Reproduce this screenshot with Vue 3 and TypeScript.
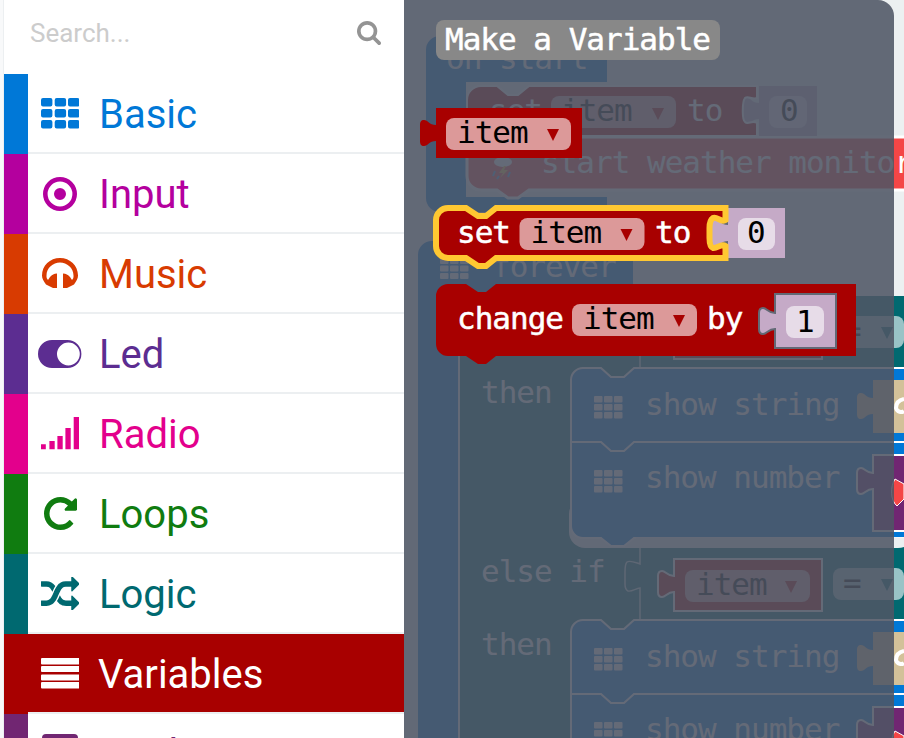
<script setup lang="ts">
interface Category {
  name: string
  color: string
  vb: string
  w: number
  h: number
  d: string
  active?: boolean
}

interface Field {
  x: number
  y: number
}

const gridPath = (): string => {
  const xs = [0, 13.7, 27]
  const ys = [0, 11, 22]
  return xs
    .flatMap((x) =>
      ys.map(
        (y) =>
          `M${x + 2} ${y}h7.4a2 2 0 0 1 2 2v4.6a2 2 0 0 1-2 2h-7.4a2 2 0 0 1-2-2v-4.6a2 2 0 0 1 2-2z`
      )
    )
    .join('')
}

const categories: Category[] = [
  { name: 'Basic', color: '#0078d7', vb: '0 0 38.4 30.6', w: 38.4, h: 30.6, d: gridPath() },
  {
    name: 'Input',
    color: '#b4009e',
    vb: '0 0 34 34',
    w: 34,
    h: 34,
    d: 'M17 0a17 17 0 1 0 0 34a17 17 0 1 0 0-34zM17 4.6a12.4 12.4 0 1 1 0 24.8a12.4 12.4 0 1 1 0-24.8zM17 11a6 6 0 1 0 0 12a6 6 0 1 0 0-12z'
  },
  {
    name: 'Music',
    color: '#d83b01',
    vb: '0 0 36 31',
    w: 36,
    h: 31,
    d: 'M15 15.5V30H11L4 26.5C1.5 23 0 20.500 0 17.500C0 7.500 8 0 18 0S36 7.500 36 17.500C36 20.500 34.500 23 32 26.500L25 30H21V15.500C24 15.500 26 17 28 19L30 22C31 21 31.500 20 31.500 19V17.500C31.500 10 25 4.500 18 4.500S4.500 10 4.500 17.500V19C4.500 20 5 21 6 22L8 19C10 17 12 15.500 15 15.500Z'
  },
  {
    name: 'Led',
    color: '#5c2d91',
    vb: '0 0 43.4 28',
    w: 43.4,
    h: 28,
    d: 'M14 0h15.4a14 14 0 0 1 0 28H14a14 14 0 0 1 0-28zM30.4 2.6a11.400 11.400 0 1 0 0 22.8a11.400 11.400 0 1 0 0-22.800z'
  },
  {
    name: 'Radio',
    color: '#e3008c',
    vb: '0 0 38 32.3',
    w: 38,
    h: 32.3,
    d: 'M0 27.3h4.8v5H0zM8.400 24h5.300v8.300H8.400zM16.400 19h5.300v13.300h-5.300zM24.400 11h5.300v21.300h-5.300zM32.700 0H38v32.300h-5.300z'
  },
  {
    name: 'Loops',
    color: '#107c10',
    vb: '128 128 1536 1536',
    w: 33,
    h: 33,
    d: 'M1664 256v448q0 26-19 45t-45 19h-448q-42 0-59-40-17-39 14-69l138-138q-148-137-349-137-104 0-198.500 40.500t-163.500 109.500-109.500 163.500-40.500 198.500 40.500 198.500 109.500 163.500 163.500 109.500 198.500 40.500q119 0 225-52t179-147q7-10 23-12 15 0 25 9l137 138q9 8 9.500 20.500t-7.500 22.500q-109 132-264 204.500t-327 72.500q-156 0-298-61t-245-164-164-245-61-298 61-298 164-245 245-164 298-61q147 0 284.500 55.500t244.500 156.500l130-129q29-31 70-14 39 17 39 59z'
  },
  {
    name: 'Logic',
    color: '#006970',
    vb: '0 64 1792 1536',
    w: 38.5,
    h: 33,
    d: 'M666 481q-60 92-137 273-22-45-37-72.500t-40.500-63.500-51-56.500-63-35-81.500-14.500h-224q-14 0-23-9t-9-23v-192q0-14 9-23t23-9h224q250 0 410 225zm1126 799q0 14-9 23l-320 320q-9 9-23 9-13 0-22.500-9.500t-9.500-22.500v-192q-32 0-85 .5t-81 1-73-1-71-5-64-10.500-63-18.500-58-28.500-59-40-55-53.500-56-69.500q59-93 136-273 22 45 37 72.500t40.500 63.500 51 56.500 63 35 81.500 14.500h256v-192q0-14 9-23t23-9q12 0 24 10l319 319q9 9 9 23zm0-896q0 14-9 23l-320 320q-9 9-23 9-13 0-22.500-9.500t-9.500-22.500v-192h-256q-48 0-87 15t-69 45-51 61.500-45 77.500q-32 62-78 171-29 66-49.500 111t-54 105-64 100-74 83-90 68.500-106.500 42-128 16.500h-224q-14 0-23-9t-9-23v-192q0-14 9-23t23-9h224q48 0 87-15t69-45 51-61.500 45-77.500q32-62 78-171 29-66 49.500-111t54-105 64-100 74-83 90-68.500 106.500-42 128-16.500h256v-192q0-14 9-23t23-9q12 0 24 10l319 319q9 9 9 23z'
  },
  {
    name: 'Variables',
    color: '#a80000',
    vb: '0 0 38.5 30.5',
    w: 38.5,
    h: 30.5,
    d: 'M1 0h36.5a1 1 0 0 1 1 1v4.5a1 1 0 0 1-1 1H1a1 1 0 0 1-1-1V1a1 1 0 0 1 1-1zM1 8h36.5a1 1 0 0 1 1 1v4a1 1 0 0 1-1 1H1a1 1 0 0 1-1-1V9a1 1 0 0 1 1-1zM1 16.500h36.500a1 1 0 0 1 1 1v4a1 1 0 0 1-1 1H1a1 1 0 0 1-1-1v-4a1 1 0 0 1 1-1zM1 24h36.500a1 1 0 0 1 1 1v4.500a1 1 0 0 1-1 1H1a1 1 0 0 1-1-1V25a1 1 0 0 1 1-1z',
    active: true
  },
  {
    name: 'Math',
    color: '#712672',
    vb: '0 0 36 40',
    w: 36,
    h: 40,
    d: 'M4 0h28a4 4 0 0 1 4 4v32a4 4 0 0 1-4 4H4a4 4 0 0 1-4-4V4a4 4 0 0 1 4-4z'
  }
]

// rectangle with the puzzle tab sticking out on its left side
const tabbed = (x: number, y: number, w: number, h: number, yc: number): string =>
  `M${x} ${y}h${w}v${h}h${-w}V${yc + 8}` +
  `C${x - 7} ${yc + 8} ${x - 8} ${yc + 13} ${x - 12} ${yc + 13}` +
  `C${x - 15} ${yc + 13} ${x - 16} ${yc + 11} ${x - 16} ${yc + 8}V${yc - 8}` +
  `C${x - 16} ${yc - 11} ${x - 15} ${yc - 13} ${x - 12} ${yc - 13}` +
  `C${x - 8} ${yc - 13} ${x - 7} ${yc - 8} ${x} ${yc - 8}Z`

const arrow = (x: number, y: number): string => `${x},${y} ${x + 12},${y} ${x + 6},${y + 12}`

const gridCells = (x: number, y: number, w: number, h: number): Field[] => {
  const cells: Field[] = []
  for (let r = 0; r < 3; r++) {
    for (let c = 0; c < 3; c++) {
      cells.push({ x: x + c * (w + 1.5), y: y + r * (h + 1.5) })
    }
  }
  return cells
}

const setBlock =
  'M448 208H466L478 216H486L496 208H725.5V220C721 223 717 216 713 218C710 220 709.5 224 709.5 228V238C709.5 243 710 247 713 248C717 249 721 243 725.5 246V258H496L486 266H478L466 258H448A12 12 0 0 1 436 246V220A12 12 0 0 1 448 208Z'
const changeBlock =
  'M448 284H466L478 292H486L496 284H856V356H496L486 364H478L466 356H448A12 12 0 0 1 436 344V296A12 12 0 0 1 448 284Z'

const pills: Field[] = [
  { x: 446, y: 118 },
  { x: 519.5, y: 218 },
  { x: 572, y: 304 }
]

const statementTops = [368, 620]
</script>

<template>
  <div class="app">
    <div class="gutter"></div>

    <aside class="toolbox">
      <div class="search">
        <input class="search-input" type="text" placeholder="Search..." />
        <svg class="search-icon" viewBox="64 128 1664 1664" width="24" height="24">
          <path
            fill="#949494"
            d="M1216 832q0-185-131.500-316.500t-316.500-131.500-316.500 131.500-131.500 316.500 131.500 316.500 316.500 131.500 316.500-131.500 131.500-316.500zm512 832q0 52-38 90t-90 38q-54 0-90-38l-343-342q-179 124-399 124-143 0-273.500-55.500t-225-150-150-225-55.500-273.500 55.500-273.500 150-225 225-150 273.500-55.500 273.500 55.500 225 150 150 225 55.500 273.500q0 220-124 399l343 343q37 37 37 90z"
          />
        </svg>
      </div>
      <div
        v-for="cat in categories"
        :key="cat.name"
        class="cat"
        :class="{ active: cat.active }"
        :style="{ '--cat': cat.color }"
      >
        <span class="strip"></span>
        <span class="cat-body">
          <span class="cat-icon">
            <svg :viewBox="cat.vb" :width="cat.w" :height="cat.h">
              <path :d="cat.d" fill="currentColor" fill-rule="evenodd" />
            </svg>
          </span>
          <span class="cat-name">{{ cat.name }}</span>
        </span>
      </div>
    </aside>

    <div class="workspace">
      <svg class="canvas" viewBox="404 0 500 738" width="500" height="738">
        <!-- workspace blocks lying under the flyout -->
        <g class="under">
          <path
            d="M440 36H595A12 12 0 0 1 607 48V82H466V197H607V212H440A14 14 0 0 1 426 198V50A14 14 0 0 1 440 36Z"
            fill="#0078d7"
          />
          <text x="446" y="69" class="code" fill="#fff">on start</text>

          <path
            d="M467 137H910V190H529L518 198H508L497 190H481A14 14 0 0 1 467 176Z"
            fill="#f44646"
            stroke="#fff"
            stroke-width="3"
          />
          <path :d="tabbed(759, 86, 58, 50, 111)" fill="#c5aac7" />
          <path
            d="M481 86H497L508 95H518L529 86H757V98C752 100 748 95 745 98C742 102 742 120 745 122C748 125 752 120 757 123V136H467V100A14 14 0 0 1 481 86Z"
            fill="#a80000"
            stroke="#fff"
            stroke-width="2"
          />
          <text x="489" y="121" class="code" fill="#fff">set</text>
          <rect x="551" y="96" width="125" height="32" rx="8" fill="#fff" fill-opacity="0.6" />
          <text x="561" y="121" class="code" fill="#000">item</text>
          <polygon :points="arrow(652, 108)" fill="#a80000" />
          <text x="687" y="121" class="code" fill="#fff">to</text>
          <rect x="769" y="96" width="38" height="32" rx="8" fill="#fff" fill-opacity="0.6" />
          <text x="780" y="121" class="code" fill="#000">0</text>
          <text x="541" y="173" class="code" fill="#fff">start weather monitor</text>
          <ellipse cx="503" cy="162" rx="9" ry="5" fill="#fff" />
          <path d="M504 166L499 173H503L500 178L508 170H504L506 166Z" fill="#f5c242" />
          <path d="M495 171L493 176M499 176L497 179M510 172L508 177" stroke="#4aa3e8" stroke-width="2" />

          <path
            d="M432 241H619A14 14 0 0 1 633 255V296H459V760H418V255A14 14 0 0 1 432 241Z"
            fill="#0078d7"
          />
          <rect
            v-for="(c, i) in gridCells(440, 258, 8.5, 6)"
            :key="'f' + i"
            :x="c.x"
            :y="c.y"
            width="8.5"
            height="6"
            rx="1"
            fill="#fff"
          />
          <text x="492" y="277" class="code" fill="#fff">forever</text>
          <rect x="459" y="296" width="451" height="464" fill="#006970" />
          <path d="M459 296V760" stroke="#fff" stroke-width="2" fill="none" />

          <text x="481" y="403" class="code" fill="#fff">then</text>
          <text x="481" y="582" class="code" fill="#fff">else if</text>
          <text x="481" y="655" class="code" fill="#fff">then</text>

          <g v-for="top in statementTops" :key="top" :transform="`translate(0 ${top})`">
            <!-- condition row above the statement -->
            <path
              d="M640 -72V-56C634 -58 630 -60 627 -58C625 -56 625 -52 625 -48V-36C625 -32 626 -30 628 -29C632 -28 636 -32 640 -32V0"
              stroke="#fff"
              stroke-opacity="0.8"
              stroke-width="1.5"
              fill="none"
            />
            <path :d="tabbed(674, -61, 148, 52, -36)" fill="#a80000" stroke="#fff" stroke-width="2" />
            <rect x="685" y="-50" width="125" height="32" rx="8" fill="#fff" fill-opacity="0.6" />
            <text x="696" y="-25" class="code" fill="#000">item</text>
            <polygon :points="arrow(785, -39)" fill="#a80000" />
            <rect x="833" y="-52" width="71" height="32" rx="8" fill="#fff" fill-opacity="0.6" />
            <text x="843" y="-27" class="code" fill="#000">=</text>
            <polygon :points="arrow(881, -41)" fill="#006970" />

            <rect x="569" y="130" width="345" height="50" rx="16" fill="#ecf0f1" />
            <path
              d="M571 12A12 12 0 0 1 583 0H601L611 9H624L634 0H910V170H634L624 178H611L601 170H583A12 12 0 0 1 571 158Z"
              fill="#0078d7"
              stroke="#fff"
              stroke-width="2"
            />
            <path d="M636 171H910" stroke="#ecf0f1" stroke-width="3" />
            <path d="M571 74H601L611 83H624L634 74H910" stroke="#fff" stroke-width="2" fill="none" />

            <rect
              v-for="(c, i) in gridCells(594, 28, 8.5, 6.5)"
              :key="'a' + i"
              :x="c.x"
              :y="c.y"
              width="8.5"
              height="6.5"
              rx="1"
              fill="#fff"
            />
            <rect
              v-for="(c, i) in gridCells(594, 102, 8.5, 6.5)"
              :key="'b' + i"
              :x="c.x"
              :y="c.y"
              width="8.5"
              height="6.5"
              rx="1"
              fill="#fff"
            />
            <text x="645" y="47" class="code" fill="#fff">show string</text>
            <text x="645" y="120" class="code" fill="#fff">show number</text>

            <path :d="tabbed(873, 12, 37, 53, 38)" fill="#d3c199" />
            <path d="M904 31C899 32 896 35 896 40C897 44 902 45 904 43" stroke="#fff" stroke-width="4" fill="none" />
            <path :d="tabbed(873, 87, 37, 76, 113)" fill="#712672" stroke="#fff" stroke-width="2" />
            <path d="M904 116L895 111C890 119 890 132 897 138L904 131Z" fill="#f44646" stroke="#fff" stroke-width="1" />
          </g>
        </g>

        <!-- flyout panel -->
        <path d="M404 0H878A16 16 0 0 1 894 16V738H404Z" fill="rgb(78,85,100)" fill-opacity="0.88" />

        <!-- flyout blocks -->
        <rect x="436" y="20" width="284" height="40" rx="8" fill="#888" />
        <text x="445" y="50" class="code heavy" fill="#fff">Make a Variable</text>

        <path :d="tabbed(436, 108, 146, 50, 133)" fill="#a80000" />

        <path :d="tabbed(728, 208, 57, 50, 233)" fill="#c5aac7" />
        <path :d="setBlock" fill="#a80000" stroke="#ffc832" stroke-width="6" />
        <text x="457" y="243" class="code heavy" fill="#fff">set</text>
        <text x="655" y="243" class="code heavy" fill="#fff">to</text>
        <rect x="738" y="218" width="37" height="32" rx="8" fill="#e7dce8" />
        <text x="747" y="243" class="code" fill="#000">0</text>

        <path :d="changeBlock" fill="#a80000" />
        <text x="457" y="329" class="code heavy" fill="#fff">change</text>
        <text x="707" y="329" class="code heavy" fill="#fff">by</text>
        <path :d="tabbed(775, 294, 61, 54, 321)" fill="#c5aac7" stroke="#626975" stroke-width="2" />
        <rect x="786" y="306" width="38" height="32" rx="8" fill="#e7dce8" />
        <text x="796" y="332" class="code" fill="#000">1</text>

        <g v-for="(p, i) in pills" :key="'p' + i">
          <rect :x="p.x" :y="p.y" width="125" height="32" rx="8" fill="#dc9999" />
          <text :x="p.x + 11" :y="p.y + 25" class="code" fill="#000">item</text>
          <polygon :points="arrow(p.x + 101, p.y + 11)" fill="#a80000" />
        </g>
      </svg>
    </div>
  </div>
</template>

<style scoped>
.app {
  display: flex;
  width: 904px;
  height: 738px;
  overflow: hidden;
  background: #fff;
}

.gutter {
  flex: none;
  width: 3px;
  background: #f8f9fa;
  border-right: 1px solid #eceff1;
}

.toolbox {
  flex: none;
  width: 400px;
  height: 738px;
  overflow: hidden;
  background: #fff;
  font-family: Roboto, sans-serif;
}

.search {
  display: flex;
  align-items: center;
  height: 74px;
  padding: 0 23px 8px 26px;
  box-sizing: border-box;
}

.search-input {
  flex: 1;
  min-width: 0;
  border: 0;
  outline: 0;
  padding: 0;
  font-family: Roboto, sans-serif;
  font-size: 26px;
  background: transparent;
}

.search-input::placeholder {
  color: #ccc;
  opacity: 1;
}

.search-icon {
  flex: none;
}

.cat {
  display: flex;
  height: 80px;
  color: var(--cat);
}

.strip {
  flex: none;
  width: 24px;
  background: var(--cat);
}

.cat-body {
  flex: 1;
  display: flex;
  align-items: center;
  border-bottom: 2px solid #eceff1;
  padding-left: 9px;
}

.cat.active .cat-body {
  background: var(--cat);
  color: #fff;
}

.cat.active .cat-name {
  margin-left: 15px;
}

.cat-icon {
  flex: none;
  display: flex;
  justify-content: center;
  width: 46px;
  padding-top: 1px;
}

.cat-name {
  margin-left: 16px;
  padding-top: 3px;
  font-size: 40px;
  line-height: 1;
}

.workspace {
  flex: 1;
  position: relative;
  background: #ecf0f1;
}

.canvas {
  position: absolute;
  top: 0;
  left: 0;
  display: block;
}

.code {
  font-family: "DejaVu Sans Mono", monospace;
  font-size: 31px;
  letter-spacing: -1px;
}

.heavy {
  stroke: #fff;
  stroke-width: 0.5px;
}
</style>
